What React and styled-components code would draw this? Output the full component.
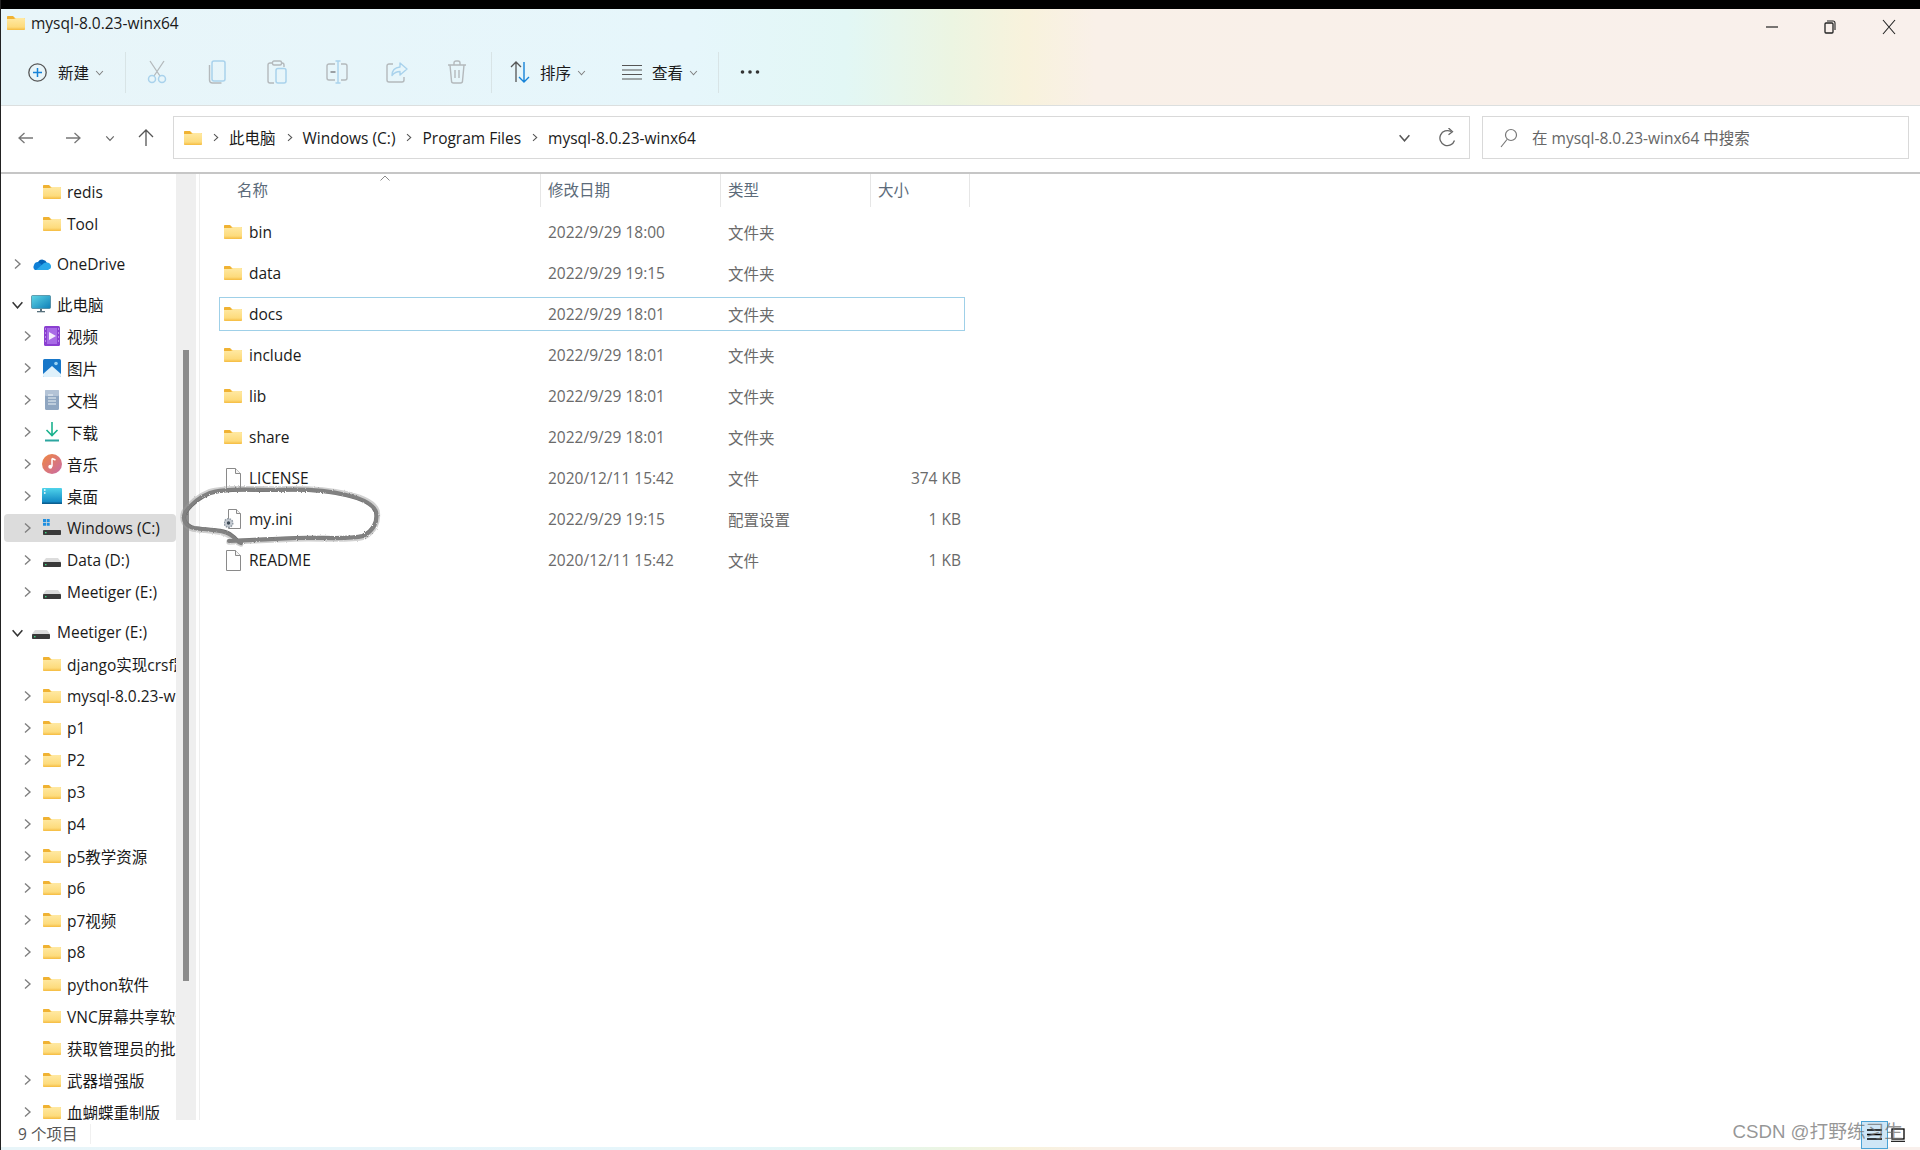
import React from 'react';
import styled, { createGlobalStyle } from 'styled-components';

const FONT = '"Open Sans", "Noto Sans CJK SC", sans-serif';
const SHEEN =
  'linear-gradient(91deg, #e8f5f9 0%, #e6f6fb 36%, #e2f7f5 44%, #ecf5e2 49.5%, #f8f2dc 53.4%, #f9f0e8 57%, #f9f0ec 100%)';

const GlobalStyle = createGlobalStyle`
  html, body {
    margin: 0;
    background: #fff;
  }
  body {
    font-family: ${FONT};
    font-size: 15.5px;
    color: #1a1a1a;
    overflow: hidden;
  }
  * {
    box-sizing: border-box;
  }
  svg {
    flex: none;
  }
`;

const Window = styled.div`
  position: relative;
  width: 1920px;
  height: 1150px;
  display: flex;
  flex-direction: column;
  border-left: 1px solid #222;
  overflow: hidden;
`;

const TopEdge = styled.div`
  height: 9px;
  margin-left: -1px;
  background: #000;
  flex: none;
`;

const Ribbon = styled.div`
  height: 96px;
  flex: none;
  background: ${SHEEN};
`;

const TitleRow = styled.div`
  height: 36px;
  display: flex;
  justify-content: space-between;
  align-items: flex-start;
  padding: 0 2px 0 6px;
`;

const Title = styled.div`
  display: flex;
  align-items: center;
  gap: 6px;
  height: 28px;
  line-height: 28px;
`;

const WindowButtons = styled.div`
  display: flex;
`;

const WindowButton = styled.div`
  width: 58.5px;
  height: 36px;
  display: flex;
  align-items: center;
  justify-content: center;
`;

const Toolbar = styled.div`
  height: 54px;
  display: flex;
  align-items: center;
  padding-left: 27px;
`;

const MenuButton = styled.div`
  display: flex;
  align-items: center;
  flex: none;
  white-space: nowrap;
  margin-left: ${(p) => p.$offset || 0}px;
  width: ${(p) => p.$width}px;
`;

const MenuIcon = styled.div`
  width: ${(p) => p.$size}px;
  height: 20px;
  flex: none;
  margin-right: ${(p) => p.$space}px;
  display: flex;
  align-items: center;
  justify-content: center;
`;

const Caret = styled.div`
  margin-left: 6px;
  display: flex;
  align-items: center;
`;

const ToolDivider = styled.div`
  width: 1px;
  height: 41px;
  flex: none;
  background: #d8e4e6;
  margin: 0 ${(p) => p.$right}px 0 ${(p) => p.$left}px;
`;

const IconButton = styled.div`
  width: 60px;
  flex: none;
  display: flex;
  justify-content: center;
  align-items: center;
`;

const MoreButton = styled.div`
  margin-left: 21px;
  width: 20px;
  display: flex;
  justify-content: center;
`;

const AddressRow = styled.div`
  height: 69px;
  flex: none;
  display: flex;
  align-items: flex-start;
  padding: 10px 11px 0 2px;
  border-top: 1px solid #dcdfdf;
  border-bottom: 2px solid #c6c6c6;
`;

const NavButton = styled.div`
  width: ${(p) => p.$width}px;
  height: 43px;
  flex: none;
  display: flex;
  align-items: center;
  justify-content: center;
`;

const AddressBox = styled.div`
  flex: 1;
  height: 43px;
  margin-left: 5px;
  display: flex;
  align-items: center;
  padding-left: 10px;
  border: 1px solid #d9d9d9;
`;

const Separator = styled.div`
  width: 6px;
  margin: 0 10.5px;
  display: flex;
  align-items: center;
  justify-content: center;
`;

const AddressTools = styled.div`
  margin-left: auto;
  display: flex;
`;

const AddressTool = styled.div`
  width: 43px;
  height: 41px;
  display: flex;
  align-items: center;
  justify-content: center;
`;

const SearchBox = styled.div`
  width: 427px;
  height: 43px;
  margin-left: 12px;
  display: flex;
  align-items: center;
  gap: 14px;
  padding-left: 17px;
  border: 1px solid #d9d9d9;
  color: #666;
`;

const Body = styled.div`
  flex: 1;
  min-height: 0;
  display: flex;
`;

const Sidebar = styled.nav`
  width: 175px;
  flex: none;
  padding: 4px 0 0 3px;
  overflow: hidden;
`;

const TreeRow = styled.div`
  height: 28px;
  width: 172px;
  margin: ${(p) => (p.$spaced ? 12 : 0)}px 0 4px;
  display: flex;
  align-items: center;
  padding-left: ${(p) => (p.$level === 0 ? 5 : 15)}px;
  border-radius: 4px;
  white-space: nowrap;
  overflow: hidden;
  background: ${(p) => (p.$selected ? '#dcdcdc' : 'transparent')};
`;

const Twisty = styled.div`
  width: 16px;
  flex: none;
  margin-right: ${(p) => (p.$level === 0 ? 7 : 8)}px;
  display: flex;
  justify-content: center;
`;

const TreeIcon = styled.div`
  width: 18px;
  height: 20px;
  flex: none;
  margin-right: ${(p) => (p.$level === 0 ? 7 : 6)}px;
  display: flex;
  align-items: center;
  justify-content: center;
`;

const ScrollTrack = styled.div`
  width: 20px;
  flex: none;
  background: #efefef;
  padding: 176px 0 0 7px;
`;

const ScrollThumb = styled.div`
  width: 6px;
  height: 631px;
  background: #8c8c8c;
`;

const FilePane = styled.main`
  flex: 1;
  margin-left: 3px;
  padding-left: 19px;
  border-left: 1px solid #eee;
`;

const HeaderRow = styled.div`
  display: grid;
  grid-template-columns: 321px 180px 150px 100px;
  height: 33px;
  color: #5c6b7a;
`;

const HeaderCell = styled.div`
  position: relative;
  padding-left: ${(p) => (p.$first ? 18 : 7)}px;
  line-height: 32px;
  border-left: ${(p) => (p.$first ? 'none' : '1px solid #e6e6e6')};
  border-right: ${(p) => (p.$last ? '1px solid #e6e6e6' : 'none')};
`;

const SortMark = styled.svg`
  position: absolute;
  left: 161px;
  top: 1px;
`;

const FileList = styled.div`
  padding-top: 8px;
`;

const FileRow = styled.div`
  width: 746px;
  height: 34px;
  margin-bottom: 7px;
  display: grid;
  grid-template-columns: 320px 180px 150px 94px;
  align-items: center;
  border: 1px solid ${(p) => (p.$selected ? '#9fd0e8' : 'transparent')};
`;

const FileName = styled.div`
  display: flex;
  align-items: center;
  padding-left: 4px;
  gap: 7px;
`;

const FileIcon = styled.div`
  width: 18px;
  height: 20px;
  display: flex;
  align-items: center;
  justify-content: center;
`;

const FileMeta = styled.div`
  padding-left: 8px;
  color: #6a6a6a;
`;

const FileSize = styled.div`
  text-align: right;
  padding-right: 3px;
  color: #6a6a6a;
`;

const StatusBar = styled.footer`
  height: 30px;
  flex: none;
  display: flex;
  align-items: flex-start;
  margin-left: -1px;
  padding-left: 18px;
  border-bottom: 3px solid;
  border-image: ${SHEEN} 1;
  color: #555;
`;

const StatusText = styled.div`
  line-height: 28px;
  padding-right: 13px;
`;

const StatusDivider = styled.div`
  width: 1px;
  height: 20px;
  margin-top: 4px;
  background: #f0f0f0;
`;

const ViewToggles = styled.div`
  margin-left: auto;
  display: flex;
  padding-right: 12px;
`;

const ViewToggle = styled.div`
  width: ${(p) => (p.$active ? 27 : 20)}px;
  height: 28px;
  margin-top: 1px;
  display: flex;
  align-items: center;
  justify-content: center;
  background: ${(p) => (p.$active ? '#cfe6f6' : 'transparent')};
  border: ${(p) => (p.$active ? '1px solid #4ba3d6' : 'none')};
`;

const Watermark = styled.div`
  position: absolute;
  right: 17px;
  bottom: 6px;
  font-family: "Liberation Sans", "Noto Sans CJK SC", sans-serif;
  font-size: 18.7px;
  line-height: 24px;
  color: rgba(110, 110, 110, 0.72);
  white-space: nowrap;
`;

const Doodle = styled.svg`
  position: absolute;
  left: 175px;
  top: 482px;
`;

const Chevron = ({ dir = 'right', size = 12, color = '#808080', width = 1.4 }) => {
  const paths = {
    right: 'M4 1.5 9 6 4 10.5',
    down: 'M1.5 4 6 9 10.5 4',
  };
  return (
    <svg width={size} height={size} viewBox="0 0 12 12" fill="none">
      <path d={paths[dir]} stroke={color} strokeWidth={width} />
    </svg>
  );
};

const FolderIcon = () => (
  <svg width="18" height="14" viewBox="0 0 18 14">
    <defs>
      <linearGradient id="folderFace" x1="0" y1="0" x2="0" y2="1">
        <stop offset="0" stopColor="#ffe9a3" />
        <stop offset="0.75" stopColor="#fddb7c" />
        <stop offset="1" stopColor="#f5bb3f" />
      </linearGradient>
    </defs>
    <path d="M0 1C0 .4.4 0 1 0h5l2 2h9c.6 0 1 .4 1 1v2H0z" fill="#f0b232" />
    <path d="M0 3h7l2-1h8c.6 0 1 .4 1 1v10c0 .6-.4 1-1 1H1c-.6 0-1-.4-1-1z" fill="url(#folderFace)" />
  </svg>
);

const OneDriveIcon = () => (
  <svg width="20" height="14" viewBox="0 0 20 14">
    <path d="M7 5a5 5 0 0 1 9 1l-6 5-5-3z" fill="#0364b8" />
    <path d="M3 8a4 4 0 0 1 4-3l3 2 4 6H4a4 4 0 0 1-1-5z" fill="#0f7fd6" />
    <path d="M16 5.500a4 4 0 0 1 3.500 6L17 13H5l8-7a4 4 0 0 1 3-.500z" fill="#29a8ea" />
  </svg>
);

const PcIcon = () => (
  <svg width="20" height="18" viewBox="0 0 20 18">
    <defs>
      <linearGradient id="pcFace" x1="0" y1="0" x2="1" y2="1">
        <stop offset="0" stopColor="#5fd6e6" />
        <stop offset="1" stopColor="#0f7fb8" />
      </linearGradient>
    </defs>
    <rect x="0.500" y="0.500" width="19" height="13" rx="1" fill="url(#pcFace)" stroke="#2f6f86" strokeWidth="0.6" />
    <rect x="9" y="14" width="2" height="2.500" fill="#58707c" />
    <rect x="6" y="16" width="8" height="1.300" fill="#58707c" />
  </svg>
);

const VideoIcon = () => (
  <svg width="16" height="20" viewBox="0 0 16 20">
    <rect width="16" height="20" rx="1.500" fill="#8a3fd1" />
    <rect x="3" y="2" width="10" height="16" fill="#a86be6" />
    <path d="M5 6l7 4-7 4z" fill="#f4edfc" />
    <path d="M1 3h1M1 7h1M1 11h1M1 15h1M14 3h1M14 7h1M14 11h1M14 15h1" stroke="#e5d6f7" strokeWidth="1.200" />
  </svg>
);

const PictureIcon = () => (
  <svg width="18" height="18" viewBox="0 0 18 18">
    <rect width="18" height="18" rx="1.500" fill="#1777c9" />
    <path d="M0 15l9-8 9 8v2a1 1 0 0 1-1 1H1a1 1 0 0 1-1-1z" fill="#dff1fb" />
    <circle cx="13" cy="4.500" r="1.800" fill="#9ad2f2" />
  </svg>
);

const DocIcon = () => (
  <svg width="14" height="20" viewBox="0 0 14 20">
    <rect width="14" height="20" rx="1.500" fill="#8fa6c1" />
    <rect width="14" height="6" rx="1" fill="#b3c3d6" />
    <path d="M3 5h5M3 8h8M3 11h8M3 14h8" stroke="#eef3f8" strokeWidth="1.200" />
  </svg>
);

const DownloadIcon = () => (
  <svg width="16" height="20" viewBox="0 0 16 20">
    <path d="M8 0v13M2.500 8 8 13.500 13.500 8" fill="none" stroke="#1bb28e" strokeWidth="1.600" />
    <path d="M1 18.500h14" stroke="#2ca6a0" strokeWidth="1.800" />
  </svg>
);

const MusicIcon = () => (
  <svg width="20" height="20" viewBox="0 0 20 20">
    <defs>
      <linearGradient id="musicFace" x1="0" y1="0" x2="1" y2="1">
        <stop offset="0" stopColor="#f0873f" />
        <stop offset="1" stopColor="#c96aa8" />
      </linearGradient>
    </defs>
    <circle cx="10" cy="10" r="10" fill="url(#musicFace)" />
    <path d="M10 4.500v8M10 4.500l3.500 1.500" stroke="#fff" strokeWidth="1.500" fill="none" />
    <circle cx="8.300" cy="12.800" r="2" fill="#fff" />
  </svg>
);

const DesktopIcon = () => (
  <svg width="20" height="18" viewBox="0 0 20 18">
    <defs>
      <linearGradient id="deskFace" x1="0" y1="0" x2="0" y2="1">
        <stop offset="0" stopColor="#4fd3ea" />
        <stop offset="1" stopColor="#0a7fbf" />
      </linearGradient>
    </defs>
    <rect width="20" height="16" y="1" rx="1" fill="url(#deskFace)" />
    <path d="M2 3h1.500M2 6h1.500" stroke="#fff" strokeWidth="1.300" />
    <rect y="15.500" width="20" height="1.500" fill="#0c5f8f" />
  </svg>
);

const DriveIcon = ({ system }) => (
  <svg width="18" height="18" viewBox="0 0 18 18">
    <path d="M3 7h12l3 4H0z" fill="#dcdcdc" />
    <rect y="11" width="18" height="5" rx="0.800" fill="#3a3a3a" />
    <rect x="2" y="13" width="1.500" height="1.300" fill="#3ddc84" />
    {system && <path d="M0 0h3v3H0zM3.700 0h3v3h-3zM0 3.700h3v3H0zM3.700 3.700h3v3h-3z" fill="#1f8fe0" />}
  </svg>
);

const PageIcon = ({ gear }) => (
  <svg width="18" height="21" viewBox="0 0 18 21">
    <path d={gear ? 'M4.500.5h8l4 4v15h-12z' : 'M2.500.5h9l5 5v15h-14z'} fill="#fff" stroke="#8a8a8a" />
    <path d={gear ? 'M12.500.5v4h4' : 'M11.500.5v5h5'} fill="#f4f4f4" stroke="#8a8a8a" />
    {gear && (
      <g>
        <circle cx="4.500" cy="14" r="4.300" fill="#c4cad1" stroke="#8d97a1" strokeWidth="1.400" strokeDasharray="1.600 1" />
        <circle cx="4.500" cy="14" r="1.700" fill="#3e4a56" />
      </g>
    )}
  </svg>
);

const treeIcons = {
  folder: <FolderIcon />,
  onedrive: <OneDriveIcon />,
  pc: <PcIcon />,
  video: <VideoIcon />,
  picture: <PictureIcon />,
  doc: <DocIcon />,
  download: <DownloadIcon />,
  music: <MusicIcon />,
  desktop: <DesktopIcon />,
  system: <DriveIcon system />,
  drive: <DriveIcon />,
};

const treeRows = [
  { label: 'redis', icon: 'folder', level: 1 },
  { label: 'Tool', icon: 'folder', level: 1 },
  { label: 'OneDrive', icon: 'onedrive', level: 0, twisty: 'right', spaced: true },
  { label: '此电脑', icon: 'pc', level: 0, twisty: 'down', spaced: true },
  { label: '视频', icon: 'video', level: 1, twisty: 'right' },
  { label: '图片', icon: 'picture', level: 1, twisty: 'right' },
  { label: '文档', icon: 'doc', level: 1, twisty: 'right' },
  { label: '下载', icon: 'download', level: 1, twisty: 'right' },
  { label: '音乐', icon: 'music', level: 1, twisty: 'right' },
  { label: '桌面', icon: 'desktop', level: 1, twisty: 'right' },
  { label: 'Windows (C:)', icon: 'system', level: 1, twisty: 'right', selected: true },
  { label: 'Data (D:)', icon: 'drive', level: 1, twisty: 'right' },
  { label: 'Meetiger (E:)', icon: 'drive', level: 1, twisty: 'right' },
  { label: 'Meetiger (E:)', icon: 'drive', level: 0, twisty: 'down', spaced: true },
  { label: 'django实现crsf跨站请求', icon: 'folder', level: 1 },
  { label: 'mysql-8.0.23-winx64', icon: 'folder', level: 1, twisty: 'right' },
  { label: 'p1', icon: 'folder', level: 1, twisty: 'right' },
  { label: 'P2', icon: 'folder', level: 1, twisty: 'right' },
  { label: 'p3', icon: 'folder', level: 1, twisty: 'right' },
  { label: 'p4', icon: 'folder', level: 1, twisty: 'right' },
  { label: 'p5教学资源', icon: 'folder', level: 1, twisty: 'right' },
  { label: 'p6', icon: 'folder', level: 1, twisty: 'right' },
  { label: 'p7视频', icon: 'folder', level: 1, twisty: 'right' },
  { label: 'p8', icon: 'folder', level: 1, twisty: 'right' },
  { label: 'python软件', icon: 'folder', level: 1, twisty: 'right' },
  { label: 'VNC屏幕共享软件', icon: 'folder', level: 1 },
  { label: '获取管理员的批处理', icon: 'folder', level: 1 },
  { label: '武器增强版', icon: 'folder', level: 1, twisty: 'right' },
  { label: '血蝴蝶重制版', icon: 'folder', level: 1, twisty: 'right' },
];

const files = [
  { name: 'bin', date: '2022/9/29 18:00', type: '文件夹', icon: <FolderIcon /> },
  { name: 'data', date: '2022/9/29 19:15', type: '文件夹', icon: <FolderIcon /> },
  { name: 'docs', date: '2022/9/29 18:01', type: '文件夹', icon: <FolderIcon />, selected: true },
  { name: 'include', date: '2022/9/29 18:01', type: '文件夹', icon: <FolderIcon /> },
  { name: 'lib', date: '2022/9/29 18:01', type: '文件夹', icon: <FolderIcon /> },
  { name: 'share', date: '2022/9/29 18:01', type: '文件夹', icon: <FolderIcon /> },
  { name: 'LICENSE', date: '2020/12/11 15:42', type: '文件', size: '374 KB', icon: <PageIcon /> },
  { name: 'my.ini', date: '2022/9/29 19:15', type: '配置设置', size: '1 KB', icon: <PageIcon gear /> },
  { name: 'README', date: '2020/12/11 15:42', type: '文件', size: '1 KB', icon: <PageIcon /> },
];

const GREY = '#b4b9bc';
const BLUE = '#a9d2ec';

const toolIcons = [
  <svg key="cut" width="20" height="24" viewBox="0 0 20 24" fill="none">
    <path d="M3 1l10 15M17 1L7 16" stroke={GREY} strokeWidth="1.300" />
    <circle cx="5" cy="19" r="3.500" stroke={BLUE} strokeWidth="1.500" />
    <circle cx="15" cy="19" r="3.500" stroke={BLUE} strokeWidth="1.500" />
  </svg>,
  <svg key="copy" width="18" height="24" viewBox="0 0 18 24" fill="none">
    <rect x="4" y="1" width="13" height="20" rx="2" stroke={BLUE} strokeWidth="1.500" />
    <path d="M1.500 5v15a3 3 0 0 0 3 3h9" stroke={GREY} strokeWidth="1.400" />
  </svg>,
  <svg key="paste" width="20" height="24" viewBox="0 0 20 24" fill="none">
    <path d="M6 3H3a2 2 0 0 0-2 2v16a2 2 0 0 0 2 2h4M14 3h1a2 2 0 0 1 2 2v2" stroke={GREY} strokeWidth="1.400" />
    <rect x="5.500" y="1" width="9" height="4" rx="1.500" stroke={GREY} strokeWidth="1.400" />
    <rect x="9" y="8.500" width="10" height="14.500" rx="2" stroke={BLUE} strokeWidth="1.500" />
  </svg>,
  <svg key="rename" width="22" height="24" viewBox="0 0 22 24" fill="none">
    <path d="M9 4H3a2 2 0 0 0-2 2v12a2 2 0 0 0 2 2h6M15 4h4a2 2 0 0 1 2 2v12a2 2 0 0 1-2 2h-4" stroke={GREY} strokeWidth="1.400" />
    <path d="M12 1v22M9.500 1h5M9.500 23h5" stroke={BLUE} strokeWidth="1.400" />
    <path d="M4.500 12h5" stroke="#9aa0a4" strokeWidth="2" />
  </svg>,
  <svg key="share" width="22" height="22" viewBox="0 0 22 22" fill="none">
    <path d="M7 3H3a2 2 0 0 0-2 2v14a2 2 0 0 0 2 2h13a2 2 0 0 0 2-2v-3" stroke={GREY} strokeWidth="1.400" />
    <path d="M14 2l7 6-7 6v-3.500c-4 0-6 1.500-8 4 0-5 3-8 8-8.500z" stroke={BLUE} strokeWidth="1.400" strokeLinejoin="round" />
  </svg>,
  <svg key="delete" width="20" height="24" viewBox="0 0 20 24" fill="none">
    <path d="M1 5h18M7 5V3a2 2 0 0 1 2-2h2a2 2 0 0 1 2 2v2" stroke={GREY} strokeWidth="1.400" />
    <path d="M3 5l1.500 16a2 2 0 0 0 2 2h7a2 2 0 0 0 2-2L17 5M8 10v8M12 10v8" stroke={GREY} strokeWidth="1.400" />
  </svg>,
];

const Sidebuttons = () => (
  <WindowButtons>
    <WindowButton>
      <svg width="14" height="14" viewBox="0 0 14 14">
        <path d="M1 7h12" stroke="#222" strokeWidth="1.200" />
      </svg>
    </WindowButton>
    <WindowButton>
      <svg width="14" height="14" viewBox="0 0 14 14" fill="none">
        <rect x="2" y="3" width="8" height="10" rx="1" stroke="#222" strokeWidth="1.300" />
        <path d="M4 1h6a2 2 0 0 1 2 2v7" stroke="#222" strokeWidth="1.100" />
      </svg>
    </WindowButton>
    <WindowButton>
      <svg width="16" height="16" viewBox="0 0 16 16">
        <path d="M2 1l12 14M14 1L2 15" stroke="#222" strokeWidth="1.100" />
      </svg>
    </WindowButton>
  </WindowButtons>
);

const Arrow = ({ dir, color }) => {
  const d = {
    left: 'M17 10H3M8.500 5 3 10l5.500 5',
    right: 'M3 10h14M11.500 5 17 10l-5.500 5',
    up: 'M10 18V2M3 9l7-7 7 7',
  };
  return (
    <svg width="20" height="20" viewBox="0 0 20 20" fill="none">
      <path d={d[dir]} stroke={color} strokeWidth="1.300" />
    </svg>
  );
};

const Crumb = () => (
  <Separator>
    <Chevron size={9} color="#555" />
  </Separator>
);

function App() {
  return (
    <>
      <GlobalStyle />
      <Window>
        <TopEdge />
        <Ribbon>
          <TitleRow>
            <Title>
              <FolderIcon />
              mysql-8.0.23-winx64
            </Title>
            <Sidebuttons />
          </TitleRow>
          <Toolbar>
            <MenuButton $width={97}>
              <MenuIcon $size={18} $space={12}>
                <svg width="19" height="19" viewBox="0 0 19 19" fill="none">
                  <circle cx="9.500" cy="9.500" r="8.700" stroke="#555" strokeWidth="1.300" />
                  <path d="M9.500 5v9M5 9.500h9" stroke="#1683d8" strokeWidth="1.500" />
                </svg>
              </MenuIcon>
              新建
              <Caret>
                <Chevron dir="down" size={9} />
              </Caret>
            </MenuButton>
            <ToolDivider $left={0} $right={1} />
            {toolIcons.map((icon) => (
              <IconButton key={icon.key}>{icon}</IconButton>
            ))}
            <ToolDivider $left={4} $right={18} />
            <MenuButton $width={76}>
              <MenuIcon $size={20} $space={10}>
                <svg width="20" height="24" viewBox="0 0 20 24" fill="none">
                  <path d="M6 22V2M1 7l5-5 5 5" stroke="#555" strokeWidth="1.300" />
                  <path d="M14 2v20M9 17l5 5 5-5" stroke="#1683d8" strokeWidth="1.400" />
                </svg>
              </MenuIcon>
              排序
              <Caret>
                <Chevron dir="down" size={9} />
              </Caret>
            </MenuButton>
            <MenuButton $width={76} $offset={36}>
              <MenuIcon $size={20} $space={10}>
                <svg width="20" height="16" viewBox="0 0 20 16" fill="none">
                  <path d="M0 1.500h20M0 6h20M0 10.500h20M0 15h20" stroke="#555" strokeWidth="1.200" />
                </svg>
              </MenuIcon>
              查看
              <Caret>
                <Chevron dir="down" size={9} />
              </Caret>
            </MenuButton>
            <ToolDivider $left={20} $right={0} />
            <MoreButton>
              <svg width="20" height="6" viewBox="0 0 20 6">
                <circle cx="2.500" cy="3" r="1.800" fill="#333" />
                <circle cx="10" cy="3" r="1.800" fill="#333" />
                <circle cx="17.500" cy="3" r="1.800" fill="#333" />
              </svg>
            </MoreButton>
          </Toolbar>
        </Ribbon>
        <AddressRow>
          <NavButton $width={46}>
            <Arrow dir="left" color="#777" />
          </NavButton>
          <NavButton $width={47}>
            <Arrow dir="right" color="#777" />
          </NavButton>
          <NavButton $width={28}>
            <Chevron dir="down" size={10} color="#666" />
          </NavButton>
          <NavButton $width={44}>
            <Arrow dir="up" color="#555" />
          </NavButton>
          <AddressBox>
            <FolderIcon />
            <Crumb />
            此电脑
            <Crumb />
            Windows (C:)
            <Crumb />
            Program Files
            <Crumb />
            mysql-8.0.23-winx64
            <AddressTools>
              <AddressTool>
                <Chevron dir="down" size={13} color="#555" />
              </AddressTool>
              <AddressTool>
                <svg width="18" height="20" viewBox="0 0 18 20" fill="none">
                  <path d="M15.500 12.500A7.500 7.500 0 1 1 12 3.500" stroke="#666" strokeWidth="1.300" />
                  <path d="M9.500 0l4 3.700-4 3" stroke="#666" strokeWidth="1.300" />
                </svg>
              </AddressTool>
            </AddressTools>
          </AddressBox>
          <SearchBox>
            <svg width="18" height="20" viewBox="0 0 18 20" fill="none">
              <circle cx="11" cy="7" r="5.500" stroke="#777" strokeWidth="1.200" />
              <path d="M7 11.500L1 19" stroke="#777" strokeWidth="1.200" />
            </svg>
            在 mysql-8.0.23-winx64 中搜索
          </SearchBox>
        </AddressRow>
        <Body>
          <Sidebar>
            {treeRows.map((row, i) => (
              <TreeRow key={i} $level={row.level} $spaced={row.spaced} $selected={row.selected}>
                <Twisty $level={row.level}>
                  {row.twisty && (
                    <Chevron
                      dir={row.twisty}
                      size={row.twisty === 'down' ? 13 : 12}
                      color={row.twisty === 'down' ? '#333' : '#808080'}
                    />
                  )}
                </Twisty>
                <TreeIcon $level={row.level}>{treeIcons[row.icon]}</TreeIcon>
                {row.label}
              </TreeRow>
            ))}
          </Sidebar>
          <ScrollTrack>
            <ScrollThumb />
          </ScrollTrack>
          <FilePane>
            <HeaderRow>
              <HeaderCell $first>
                名称
                <SortMark width="10" height="6" viewBox="0 0 10 6" fill="none">
                  <path d="M.5 5.500 5 1l4.500 4.500" stroke="#8a8a8a" />
                </SortMark>
              </HeaderCell>
              <HeaderCell>修改日期</HeaderCell>
              <HeaderCell>类型</HeaderCell>
              <HeaderCell $last>大小</HeaderCell>
            </HeaderRow>
            <FileList>
              {files.map((file) => (
                <FileRow key={file.name} $selected={file.selected}>
                  <FileName>
                    <FileIcon>{file.icon}</FileIcon>
                    {file.name}
                  </FileName>
                  <FileMeta>{file.date}</FileMeta>
                  <FileMeta>{file.type}</FileMeta>
                  <FileSize>{file.size}</FileSize>
                </FileRow>
              ))}
            </FileList>
          </FilePane>
        </Body>
        <StatusBar>
          <StatusText>9 个项目</StatusText>
          <StatusDivider />
          <ViewToggles>
            <ViewToggle $active>
              <svg width="15" height="14" viewBox="0 0 15 14" fill="none">
                <path d="M0 2h15M0 6.500h15M0 11h15" stroke="#000" strokeWidth="1.400" />
              </svg>
            </ViewToggle>
            <ViewToggle>
              <svg width="14" height="14" viewBox="0 0 14 14" fill="none">
                <rect x="1" y="1" width="12" height="10" stroke="#000" strokeWidth="1.300" />
                <path d="M0 13.300h14" stroke="#000" strokeWidth="1.100" />
              </svg>
            </ViewToggle>
          </ViewToggles>
        </StatusBar>
        <Watermark>CSDN @打野练习生</Watermark>
        <Doodle width="210" height="70" viewBox="175 482 210 70" fill="none">
          <defs>
            <filter id="pencil" x="-5%" y="-10%" width="110%" height="120%">
              <feTurbulence type="fractalNoise" baseFrequency="0.9" numOctaves="2" seed="4" />
              <feDisplacementMap in="SourceGraphic" scale="2.500" />
            </filter>
          </defs>
          <g filter="url(#pencil)">
            <path
              d="M240 543C236 542 236 539 230 535C222 529 205 530 193 528C185 526 181 520 184 513C190 504 199 497 209 493C225 488 250 490 275 490C300 489 325 490 345 495C358 498 372 503 375 512C377 522 372 531 362 536C348 540 320 537 295 538C275 539 250 540 228 541"
              stroke="#6e6e6e"
              strokeWidth="4.200"
              strokeLinecap="round"
            />
            <path
              d="M240 544C235 543 235 540 229 536C221 530 205 531 192 529C184 527 180 520 183 512C189 503 198 496 208 492C225 487 250 489 275 489C300 488 325 489 346 494C359 497 373 502 376 511C378 522 373 532 363 537C348 541 320 538 295 539C275 540 250 541 228 542"
              stroke="#9a9a9a"
              strokeWidth="5.500"
              strokeLinecap="round"
              opacity="0.45"
            />
          </g>
        </Doodle>
      </Window>
    </>
  );
}

export default App;
